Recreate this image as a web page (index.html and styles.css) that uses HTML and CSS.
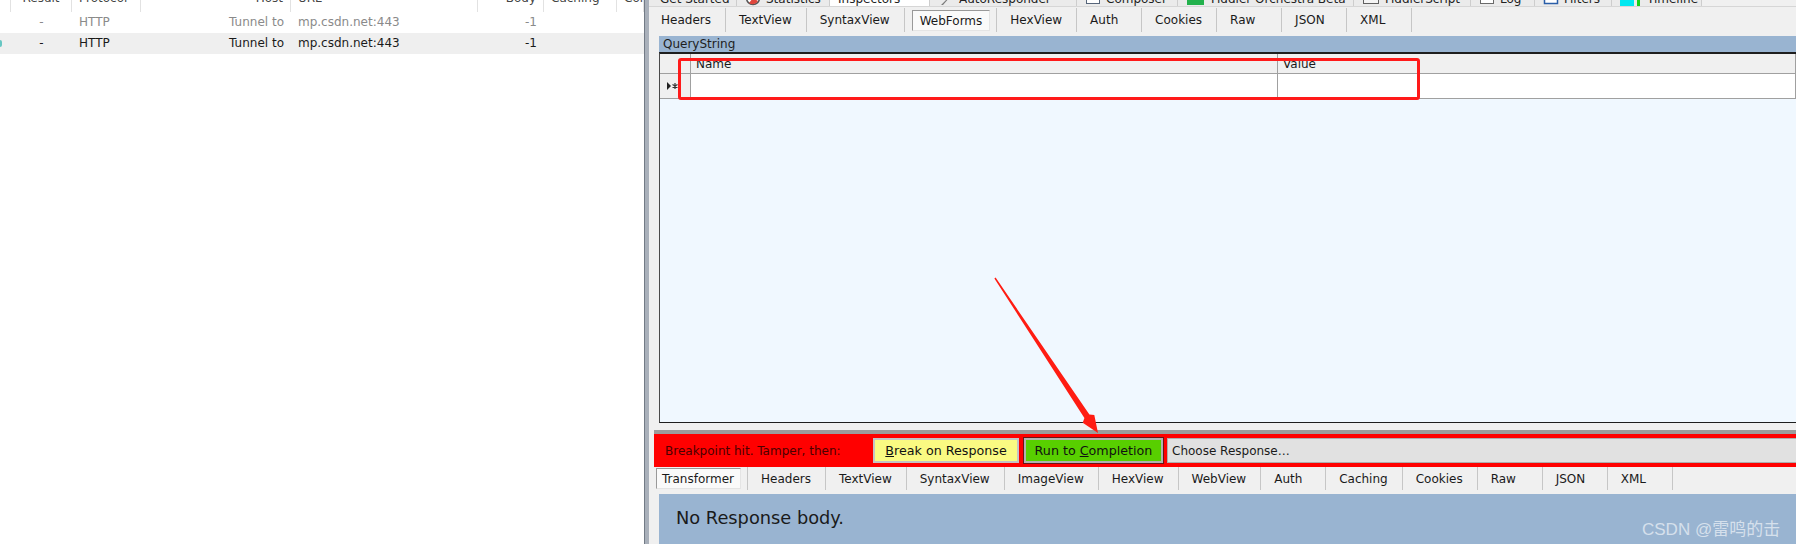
FILE: index.html
```html
<!DOCTYPE html>
<html>
<head>
	<meta charset="utf-8">
	<title>Fiddler - Inspectors</title>
	<link rel="stylesheet" href="styles.css">
</head>
<body>

	<div class="app">

		<!-- session list (scrolled, header cut off at the top) -->
		<div class="sessions">
			<div class="list-head">
				<div class="col c0"></div>
				<div class="col c-result">Result</div>
				<div class="col c-proto">Protocol</div>
				<div class="col c-host">Host</div>
				<div class="col c-url">URL</div>
				<div class="col c-body">Body</div>
				<div class="col c-cache">Caching</div>
				<div class="col c-type">Content-Type</div>
			</div>
			<div class="row dim">
				<div class="col c0"></div>
				<div class="col c-result">-</div>
				<div class="col c-proto">HTTP</div>
				<div class="col c-host">Tunnel to</div>
				<div class="col c-url">mp.csdn.net:443</div>
				<div class="col c-body">-1</div>
				<div class="col c-cache"></div>
				<div class="col c-type"></div>
			</div>
			<div class="row sel">
				<div class="col c0"><span class="ico"></span></div>
				<div class="col c-result">-</div>
				<div class="col c-proto">HTTP</div>
				<div class="col c-host">Tunnel to</div>
				<div class="col c-url">mp.csdn.net:443</div>
				<div class="col c-body">-1</div>
				<div class="col c-cache"></div>
				<div class="col c-type"></div>
			</div>
		</div>

		<div class="vsplit"></div>

		<div class="inspector">

			<!-- main tabs, only the bottom edge shows -->
			<div class="top-strip">
				<div class="mtab">Get Started</div>
				<div class="mtab">
					<svg width="16" height="16" viewBox="0 0 16 16"><circle cx="8" cy="8" r="6.5" fill="#fff" stroke="#555" stroke-width="1.5"/><path d="M8 8 L13 11 A6 6 0 0 1 4 13 Z" fill="#e0463c"/></svg>
					Statistics
				</div>
				<div class="mtab on">Inspectors</div>
				<div class="mtab">
					<svg width="16" height="16" viewBox="0 0 16 16"><path d="M12 1 L6 9 L9 9 L3 15 L5 15 L12 7 L9 7 L14 1 Z" fill="#7a7a7a"/></svg>
					AutoResponder
				</div>
				<div class="mtab">
					<svg width="16" height="16" viewBox="0 0 16 16"><rect x="1.5" y="2.5" width="13" height="11" fill="#fff" stroke="#56657a"/><rect x="2" y="3" width="12" height="2" fill="#6b8fc4"/></svg>
					Composer
				</div>
				<div class="mtab">
					<svg width="20" height="16" viewBox="0 0 20 16"><rect x="1" y="2" width="17" height="13" fill="#22b14c"/></svg>
					Fiddler Orchestra Beta
				</div>
				<div class="mtab">
					<svg width="18" height="16" viewBox="0 0 18 16"><rect x="1.5" y="2.5" width="15" height="11" fill="#f4f4f4" stroke="#606060"/><path d="M5 6 L3.5 8 L5 10 M13 6 L14.5 8 L13 10" fill="none" stroke="#2d62b0"/></svg>
					FiddlerScript
				</div>
				<div class="mtab">
					<svg width="16" height="16" viewBox="0 0 16 16"><rect x="1.5" y="2.5" width="13" height="11" fill="#fff" stroke="#6a6a6a"/></svg>
					Log
				</div>
				<div class="mtab">
					<svg width="16" height="16" viewBox="0 0 16 16"><rect x="1.5" y="2.5" width="13" height="11" fill="#fff" stroke="#2a5ea8" stroke-width="1.5"/></svg>
					Filters
				</div>
				<div class="mtab">
					<svg width="22" height="16" viewBox="0 0 22 16"><rect x="0" y="6" width="14" height="10" fill="#00e8f0"/><rect x="17" y="9" width="3" height="7" fill="#18d018"/></svg>
					Timeline
				</div>
			</div>

			<!-- request inspectors -->
			<div class="tabs req-tabs">
				<div class="tab">Headers</div>
				<div class="tab">TextView</div>
				<div class="tab">SyntaxView</div>
				<div class="tab on"><span>WebForms</span></div>
				<div class="tab">HexView</div>
				<div class="tab">Auth</div>
				<div class="tab">Cookies</div>
				<div class="tab">Raw</div>
				<div class="tab">JSON</div>
				<div class="tab">XML</div>
			</div>

			<div class="req-page">
				<div class="qs-title">QueryString</div>
				<div class="grid">
					<div class="grid-row grid-head">
						<div class="rh"></div>
						<div class="gc">Name</div>
						<div class="gc">Value</div>
					</div>
					<div class="grid-row grid-new">
						<div class="rh">
							<svg width="11" height="8" viewBox="0 0 11 8"><path d="M0 0 L4 4 L0 8 Z" fill="#222"/><path d="M8 1 V7 M5.5 2.5 L10.5 5.5 M5.5 5.5 L10.5 2.5" stroke="#333" stroke-width="1.2"/></svg>
						</div>
						<div class="gc"></div>
						<div class="gc"></div>
					</div>
				</div>
			</div>

			<div class="hsplit"></div>

			<!-- breakpoint bar -->
			<div class="bp-bar">
				<div class="bp-label">Breakpoint hit. Tamper, then:</div>
				<div class="btn btn-break"><span><u>B</u>reak on Response</span></div>
				<div class="btn btn-run"><span>Run to <u>C</u>ompletion</span></div>
				<div class="choose">Choose Response…</div>
			</div>

			<!-- response inspectors -->
			<div class="tabs resp-tabs">
				<div class="tab on"><span>Transformer</span></div>
				<div class="tab">Headers</div>
				<div class="tab">TextView</div>
				<div class="tab">SyntaxView</div>
				<div class="tab">ImageView</div>
				<div class="tab">HexView</div>
				<div class="tab">WebView</div>
				<div class="tab">Auth</div>
				<div class="tab">Caching</div>
				<div class="tab">Cookies</div>
				<div class="tab">Raw</div>
				<div class="tab">JSON</div>
				<div class="tab">XML</div>
			</div>

			<div class="resp-page">
				<div class="no-body">No Response body.</div>
			</div>

		</div>
	</div>

	<!-- red marks drawn over the screenshot -->
	<div class="marks">
		<div class="qs-mark"></div>
		<svg class="arrow" width="1796" height="544" viewBox="0 0 1796 544">
			<polygon points="994.4,278.4 1084.4,418.0 1082.7,422.7 1098,433 1094.3,414.9 1089.4,414.6 995.6,277.6" fill="#ff1c12"/>
		</svg>
		<div class="watermark">CSDN @雷鸣的击</div>
	</div>

</body>
</html>
```

FILE: styles.css
```css
body {
	margin: 0;
	width: 1796px;
	height: 544px;
	overflow: hidden;
	position: relative;
	background: #fff;
	font-family: "DejaVu Sans", sans-serif;
	font-size: 12px;
	color: #1a1a1a;
}
.app {
	display: flex;
	height: 544px;
}

/* session list */
.sessions {
	width: 644px;
	flex: none;
	overflow: hidden;
	background: #fff;
}
.list-head,
.row {
	display: flex;
}
.list-head {
	height: 23px;
	line-height: 19px;
	margin-top: -11px;
	color: #444;
}
.list-head .col {
	border-right: 1px solid #e2e2e2;
}
.col {
	flex: none;
	box-sizing: border-box;
	padding: 0 7px;
	white-space: nowrap;
	overflow: hidden;
}
.c0 {
	width: 11px;
	padding: 0;
}
.c-result {
	width: 61px;
	text-align: center;
}
.c-proto {
	width: 69px;
}
.c-host {
	width: 150px;
	text-align: right;
}
.c-url {
	width: 187px;
}
.c-body {
	width: 66px;
	text-align: right;
}
.c-cache {
	width: 73px;
}
.c-type {
	flex: 1;
}
.row {
	height: 21px;
	line-height: 21px;
}
.row.dim {
	color: #8a8a8a;
}
.row.sel {
	background: #efefef;
}
.ico {
	display: block;
	width: 2px;
	height: 7px;
	margin-top: 7px;
	background: #66c6c2;
	border-radius: 0 2px 2px 0;
}

.vsplit {
	width: 4px;
	flex: none;
	background: #a9b0ba;
	border-left: 1px solid #737b86;
}

/* inspector side */
.inspector {
	flex: 1;
	min-width: 0;
	display: flex;
	flex-direction: column;
	padding-left: 5px;
	background: #f0f0f0;
	overflow: hidden;
}

.top-strip {
	flex: none;
	height: 6px;
	margin-left: -5px;
	display: flex;
	align-items: flex-end;
	overflow: hidden;
	border-bottom: 1px solid #d6d6d6;
}
.mtab {
	flex: none;
	height: 20px;
	box-sizing: border-box;
	display: flex;
	align-items: flex-end;
	gap: 5px;
	padding: 0 8px;
	line-height: 14px;
	white-space: nowrap;
	background: #ebebeb;
	border-right: 1px solid #cdcdcd;
	color: #222;
}
.mtab svg {
	flex: none;
}
.mtab.on {
	background: #fff;
}
.mtab:nth-child(1) { width: 88px; padding-left: 11px; }
.mtab:nth-child(2) { width: 93px; }
.mtab:nth-child(3) { width: 100px; }
.mtab:nth-child(4) { width: 147px; }
.mtab:nth-child(5) { width: 101px; }
.mtab:nth-child(6) { width: 176px; }
.mtab:nth-child(7) { width: 117px; }
.mtab:nth-child(8) { width: 64px; }
.mtab:nth-child(9) { width: 77px; }
.mtab:nth-child(10) { width: 90px; }

/* tab rows */
.tabs {
	flex: none;
	display: flex;
}
.req-tabs {
	height: 29px;
}
.resp-tabs {
	height: 25px;
}
.tab {
	flex: none;
	min-width: 65px;
	box-sizing: border-box;
	display: flex;
	align-items: center;
	padding: 0 14px 0 13px;
	border-right: 1px solid #c6c6c6;
	white-space: nowrap;
}
.req-tabs .tab {
	margin: 1px 0 4px;
}
.resp-tabs .tab {
	margin: 0 0 2px;
}
.tab:first-child {
	padding-left: 7px;
}
.tab.on {
	padding: 0 6px 0 7px;
}
.tab.on span {
	padding: 3px 7px 2px;
	background: #fafafa;
	border: 1px solid;
	border-color: #999 #e4e4e4 #e4e4e4 #999;
}
.tab.on:first-child {
	padding-left: 2px;
}
.tab.on:first-child span {
	padding-left: 5px;
	padding-right: 6px;
}

/* QueryString grid */
.req-page {
	flex: 1;
	min-height: 0;
	display: flex;
	flex-direction: column;
	padding: 0 0 7px 5px;
}
.qs-title {
	flex: none;
	height: 16px;
	line-height: 16px;
	padding-left: 4px;
	background: #99b4d1;
	color: #1e1e1e;
}
.grid {
	flex: 1;
	background: #f0f8ff;
	border-top: 2px solid #1e1e1e;
	border-left: 1px solid #4a4a4a;
	border-bottom: 1px solid #1e1e1e;
}
.grid-row {
	display: grid;
	grid-template-columns: 31px 587px 1fr;
}
.rh,
.gc {
	box-sizing: border-box;
	border-right: 1px solid #a0a0a0;
}
.grid-head {
	height: 19px;
	line-height: 20px;
	background: #f0f0f0;
	border-bottom: 1px solid #a0a0a0;
}
.grid-head .gc {
	padding-left: 5px;
}
.grid-new {
	height: 24px;
	background: #fff;
	border-bottom: 1px solid #a0a0a0;
}
.grid-new .rh {
	display: flex;
	align-items: center;
	padding-left: 7px;
	background: #f0f0f0;
}

.hsplit {
	flex: none;
	height: 4px;
	background: #9c9c9c;
}

/* breakpoint bar */
.bp-bar {
	flex: none;
	height: 33px;
	display: flex;
	align-items: center;
	padding-left: 11px;
	background: #ff0000;
}
.bp-label {
	width: 208px;
	flex: none;
	color: #4a0000;
}
.btn {
	flex: none;
	height: 25px;
	box-sizing: border-box;
	display: flex;
	align-items: center;
	justify-content: center;
	font-size: 12.7px;
	color: #111;
	white-space: nowrap;
}
.btn-break {
	width: 146px;
	background: #fafa82;
	border: 2px solid #c4c4c4;
}
.btn-run {
	width: 139px;
	margin-left: 5px;
	background: #58cf00;
	border: 2px solid #b2b2b2;
	box-shadow: 0 0 0 1px #6b1414;
}
.choose {
	flex: 1;
	height: 25px;
	box-sizing: border-box;
	margin: 0 -10px 0 4px;
	padding-left: 4px;
	display: flex;
	align-items: center;
	background: #e1e1e1;
	border: 1px solid #adadad;
}

/* response body */
.resp-page {
	flex: none;
	height: 52px;
	box-sizing: border-box;
	padding: 2px 0 0 5px;
}
.no-body {
	height: 100%;
	box-sizing: border-box;
	padding: 13px 0 0 17px;
	background: #99b4d1;
	font-size: 17.8px;
	color: #1a1a1a;
}

/* annotations */
.marks {
	position: absolute;
	left: 0;
	top: 0;
	width: 1796px;
	height: 544px;
	pointer-events: none;
}
.qs-mark {
	position: absolute;
	left: 678px;
	top: 58px;
	width: 742px;
	height: 42px;
	box-sizing: border-box;
	border: 3px solid #ff1a1a;
	border-radius: 3px;
}
.arrow {
	position: absolute;
	left: 0;
	top: 0;
}
.watermark {
	position: absolute;
	left: 1642px;
	top: 515px;
	font-family: "Liberation Sans", "Noto Sans CJK SC", sans-serif;
	font-size: 17px;
	color: rgba(255, 255, 255, 0.6);
	white-space: nowrap;
}
```
